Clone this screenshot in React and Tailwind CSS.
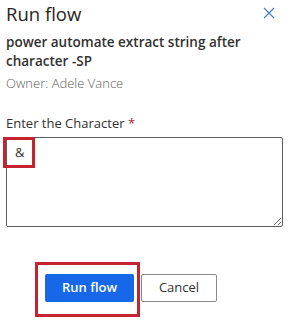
import React from 'react';

const font = { fontFamily: '"Open Sans", "Noto Sans", sans-serif' };

export default function App() {
  return (
    <div className="w-[295px] h-[320px] bg-white text-[#323130] overflow-hidden relative" style={font}>
      <div className="pl-[6px] pr-[12px]">
        {/* Header */}
        <div className="flex justify-between items-start">
          <h1 className="text-[18.5px] leading-[28px] font-normal text-[#252423]">Run flow</h1>
          <button className="mt-[7px] mr-[8px] w-[12px] h-[12px] flex items-center justify-center">
            <svg width="12" height="12" viewBox="0 0 12 12" fill="none" stroke="#4a7bbd" strokeWidth="1.1">
              <path d="M1 1 L11 11 M11 1 L1 11" />
            </svg>
          </button>
        </div>

        <p className="mt-[5px] text-[13.5px] leading-[19px] font-semibold text-[#323130]">
          power automate extract string after character -SP
        </p>
        <p className="mt-[4px] text-[13px] leading-[16px] font-light text-[#605e5c]">Owner: Adele Vance</p>

        {/* Input */}
        <label className="block mt-[22px] text-[13px] leading-[20px] font-medium text-[#323130]">
          Enter the Character <span className="text-[#a4262c] font-normal">*</span>
        </label>
        <div className="relative mt-[4px] w-[277px]">
          <textarea
            defaultValue="&"
            className="block w-[277px] h-[90px] border border-[#605e5c] rounded-[2px] pl-[8px] pt-[6px] text-[13px] leading-[17px] text-[#323130] outline-none"
            style={font}
          />
          <div className="absolute left-[-3px] top-0 w-[32px] h-[31px] border-[3px] border-[#c5232f] pointer-events-none" />
        </div>

        {/* Actions */}
        <div className="flex gap-[7px] mt-[47px] ml-[39px]">
          <div className="relative">
            <button className="w-[89px] h-[28px] rounded-[2px] bg-[#1668e8] text-white text-[13px] font-semibold">
              Run flow
            </button>
            <div className="absolute left-[-10px] top-[-12px] right-[-6px] bottom-[-15px] border-[3px] border-[#c5232f] pointer-events-none" />
          </div>
          <button className="w-[76px] h-[28px] rounded-[2px] border border-[#8a8886] bg-white text-[#323130] text-[13px]">
            Cancel
          </button>
        </div>
      </div>
    </div>
  );
}
